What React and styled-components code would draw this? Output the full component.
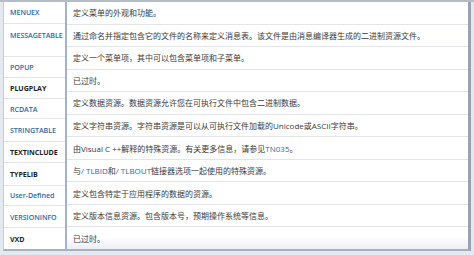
import React from "react";
import styled, { createGlobalStyle } from "styled-components";

const Global = createGlobalStyle`
  html, body {
    margin: 0;
    padding: 0;
    background: #dfe5ec;
  }
  body {
    font-family: "Open Sans", "Noto Sans CJK SC", sans-serif;
  }
`;

const Frame = styled.div`
  width: 474px;
  height: 255px;
  box-sizing: border-box;
  padding: 2px 3px 3px 3px;
  background: linear-gradient(#b4bcc6 0, #b4bcc6 2px, #e4e9ef 2px);
`;

const Table = styled.div`
  display: flex;
  height: 249px;
  background: #fff;
  border-left: 1px solid #c6ccd6;
  border-right: 3px solid #98a2b3;
  border-bottom: 2px solid #a7b0bf;
  box-sizing: border-box;
`;

const LeftCol = styled.div`
  width: 61px;
  flex: none;
  display: flex;
  flex-direction: column;
  border-right: 2px solid #a3b1d2;
`;

const RightCol = styled.div`
  flex: 1;
  display: flex;
  flex-direction: column;
`;

const Label = styled.div`
  height: ${(p) => p.$h}px;
  box-sizing: border-box;
  border-bottom: 1px solid #e3e5e8;
  display: flex;
  align-items: ${(p) => (p.$top ? "flex-start" : "center")};
  padding: ${(p) => (p.$top ? "6px" : "0")} 0 0 6px;
  font-size: 7.1px;
  font-weight: ${(p) => (p.$blue ? 600 : 700)};
  color: ${(p) => (p.$blue ? "#2c6aa8" : "#1d1d1d")};
  white-space: nowrap;
  letter-spacing: -0.05px;
  &:last-child {
    border-bottom: none;
  }
`;

const Desc = styled.div`
  flex: 1;
  box-sizing: border-box;
  border-bottom: 1px solid #e3e5e8;
  display: flex;
  align-items: center;
  padding-left: 6px;
  font-size: 8px;
  color: #3a3a3a;
  white-space: nowrap;
  overflow: hidden;
  &:last-child {
    border-bottom: none;
    background: linear-gradient(#fff 45%, #eceef2);
  }
`;

const Link = styled.span`
  color: #2c6aa8;
`;

const labels = [
  { t: "MENUEX", h: 22, blue: true },
  { t: "MESSAGETABLE", h: 33, blue: true, top: true },
  { t: "POPUP", h: 22, blue: true },
  { t: "PLUGPLAY", h: 21 },
  { t: "RCDATA", h: 20, blue: true },
  { t: "STRINGTABLE", h: 23, blue: true },
  { t: "TEXTINCLUDE", h: 21 },
  { t: "TYPELIB", h: 23 },
  { t: "User-Defined", h: 21, blue: true },
  { t: "VERSIONINFO", h: 22, blue: true },
  { t: "VXD", h: 21 },
];

const descs = [
  "定义菜单的外观和功能。",
  "通过命名并指定包含它的文件的名称来定义消息表。该文件是由消息编译器生成的二进制资源文件。",
  "定义一个菜单项，其中可以包含菜单项和子菜单。",
  "已过时。",
  "定义数据资源。数据资源允许您在可执行文件中包含二进制数据。",
  "定义字符串资源。字符串资源是可以从可执行文件加载的Unicode或ASCII字符串。",
  <>
    由Visual C ++解释的特殊资源。有关更多信息，请参见<Link>TN035</Link>。
  </>,
  <>
    与<Link>/ TLBID</Link>和<Link>/ TLBOUT</Link>链接器选项一起使用的特殊资源。
  </>,
  "定义包含特定于应用程序的数据的资源。",
  "定义版本信息资源。包含版本号，预期操作系统等信息。",
  "已过时。",
];

export default function App() {
  return (
    <>
      <Global />
      <Frame>
        <Table>
          <LeftCol>
            {labels.map((l) => (
              <Label key={l.t} $h={l.h} $blue={l.blue} $top={l.top}>
                {l.t}
              </Label>
            ))}
          </LeftCol>
          <RightCol>
            {descs.map((d, i) => (
              <Desc key={i}>{d}</Desc>
            ))}
          </RightCol>
        </Table>
      </Frame>
    </>
  );
}
